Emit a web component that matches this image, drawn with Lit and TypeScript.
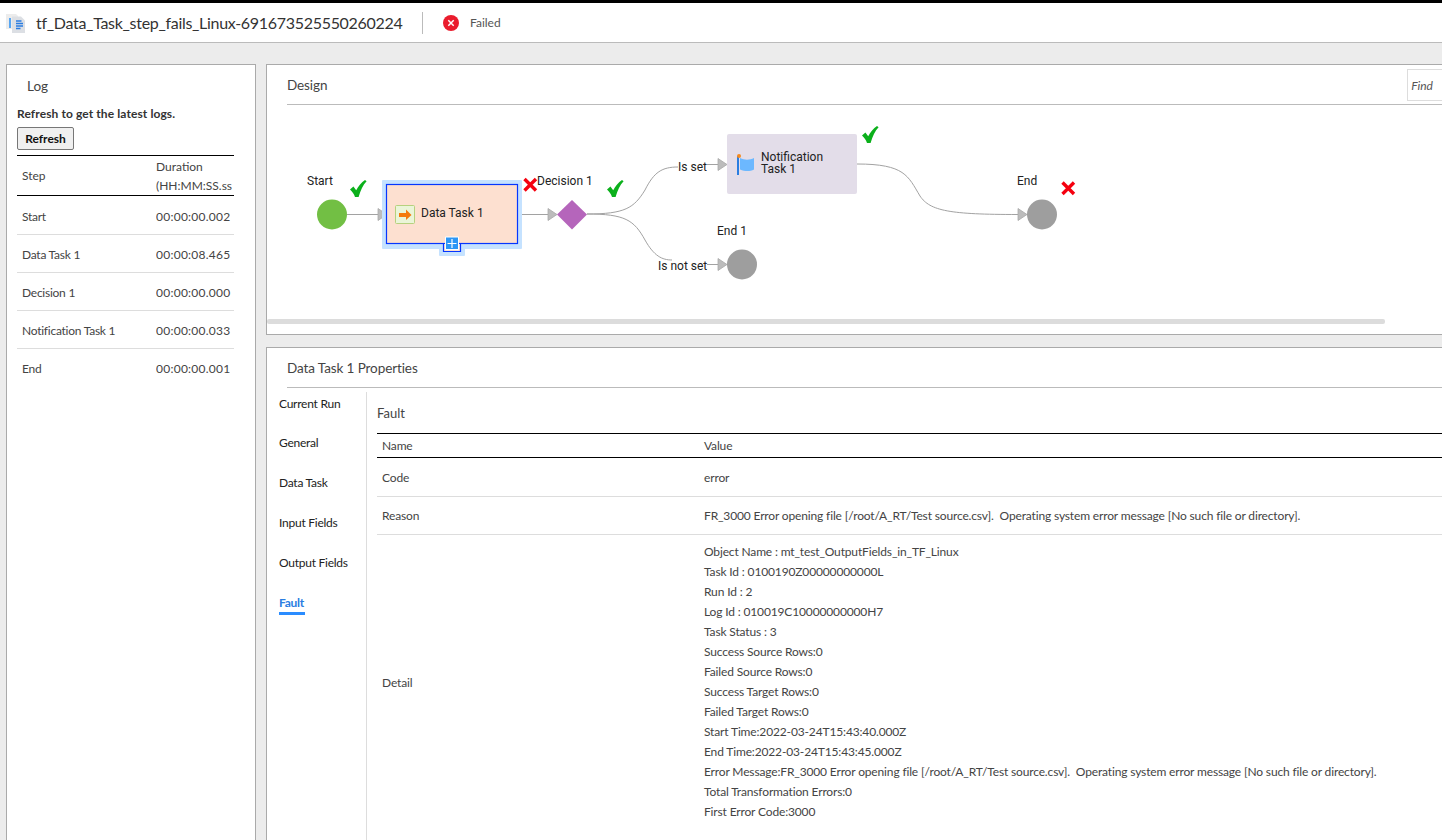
import { LitElement, html, css, svg } from "lit";
import { customElement } from "lit/decorators.js";

const check = (x: number, y: number) => svg`<path transform="translate(${x} ${y})" d="M0 9.5 L3.4 6.6 L6.2 10.2 C8.4 6 11.4 2.6 15 0 L16.6 1.2 C13 5 10.6 10 8.6 17 L5 17 C4 14 2.4 11.6 0 9.5 Z" fill="#0bb01b"/>`;
const cross = (x: number, y: number) => svg`<path transform="translate(${x} ${y})" d="M1.5 1.5 L13 13 M13 1.5 L1.5 13" stroke="#f5000f" stroke-width="3.4" fill="none"/>`;
const arrow = (x: number, y: number) => svg`<path d="M${x} ${y - 6} L${x + 9} ${y} L${x} ${y + 6} Z" fill="#bcbcbc" stroke="#a8a8a8" stroke-width="0.8"/>`;
const label = (x: number, y: number, t: string) => svg`<text x=${x} y=${y} class="t">${t}</text>`;

const LOG = [
  ["Start", "00:00:00.002"],
  ["Data Task 1", "00:00:08.465"],
  ["Decision 1", "00:00:00.000"],
  ["Notification Task 1", "00:00:00.033"],
  ["End", "00:00:00.001"],
];
const TABS = ["Current Run", "General", "Data Task", "Input Fields", "Output Fields", "Fault"];
const DETAIL = [
  "Object Name : mt_test_OutputFields_in_TF_Linux",
  "Task Id : 0100190Z00000000000L",
  "Run Id : 2",
  "Log Id : 010019C10000000000H7",
  "Task Status : 3",
  "Success Source Rows:0",
  "Failed Source Rows:0",
  "Success Target Rows:0",
  "Failed Target Rows:0",
  "Start Time:2022-03-24T15:43:40.000Z",
  "End Time:2022-03-24T15:43:45.000Z",
  "Error Message:FR_3000 Error opening file [/root/A_RT/Test source.csv].  Operating system error message [No such file or directory].",
  "Total Transformation Errors:0",
  "First Error Code:3000",
];

@customElement("app-root")
export class AppRoot extends LitElement {
  static styles = css`
    :host {
      display: block;
      width: 1442px;
      height: 840px;
      overflow: hidden;
      background: #ececec;
      font-family: Lato, "Liberation Sans", sans-serif;
      font-size: 12px;
      color: #444;
    }
    .top {
      height: 39px;
      border-top: 3px solid #000;
      border-bottom: 1px solid #bbb;
      background: #fff;
      display: flex;
      align-items: center;
      padding-left: 6px;
    }
    .top svg { display: block; flex: none; }
    .title { margin-left: 10px; font-size: 16px; color: #333; width: 366px; white-space: nowrap; letter-spacing: -0.3px; }
    .sep { width: 1px; height: 22px; background: #bbb; margin: 0 20px; }
    .status { margin-left: 11px; color: #555; }
    .main {
      display: flex;
      gap: 10px;
      padding: 21px 0 0 6px;
      width: 1600px;
      align-items: flex-start;
    }
    .panel { background: #fff; border: 1px solid #aaa; box-sizing: border-box; }
    .log { width: 250px; height: 800px; padding: 0 20px 0 10px; flex: none; }
    .log h2 { margin: 0; padding: 13px 0 0 10px; font-weight: 400; font-size: 13.5px; line-height: 16px; color: #444; }
    .hint { margin-top: 12px; font-weight: 700; color: #333; line-height: 16px; font-size: 12px; letter-spacing: 0.1px; }
    .refresh {
      display: block;
      margin-top: 5px;
      width: 57px;
      height: 23px;
      padding: 0;
      border: 1px solid #777;
      border-radius: 2px;
      background: #f0f0f0;
      font: 700 12px Lato, sans-serif;
      color: #111;
    }
    table { border-collapse: collapse; table-layout: fixed; }
    .lt { margin-top: 5px; width: 217px; }
    .lt th, .lt td { padding: 0 0 0 5px; text-align: left; font-weight: 400; white-space: nowrap; overflow: hidden; }
    .lt th:nth-child(2), .lt td:nth-child(2) { padding-left: 0; width: 78px; }
    .lt thead tr { border-top: 1px solid #000; border-bottom: 1px solid #000; height: 40px; }
    .lt thead th { line-height: 19px; color: #444; }
    .lt tbody tr { height: 38px; border-bottom: 1px solid #ddd; }
    .lt tbody tr:first-child { height: 39px; }
    .lt tbody td { padding-top: 2px; letter-spacing: -0.25px; }
    .lt tbody td:nth-child(2) { letter-spacing: 0.25px; }
    .lt tbody tr:last-child { border-bottom: 0; }
    .right { flex: none; width: 1300px; display: flex; flex-direction: column; gap: 12px; }
    .design { height: 271px; }
    .phead {
      margin-left: 20px;
      display: flex;
      align-items: center;
      border-bottom: 1px solid #bbb;
      font-size: 13.5px;
      letter-spacing: -0.1px;
      color: #444;
    }
    .design .phead { height: 39px; }
    .findbox {
      margin-left: 1080px;
      width: 60px;
      height: 32px;
      flex: none;
      margin-top: 1px;
      box-sizing: border-box;
      border: 1px solid #ddd;
      display: flex;
      align-items: center;
      padding-left: 3px;
      font-style: italic;
      font-size: 12px;
      color: #555;
    }
    .canvas { display: block; width: 1298px; height: 229px; }
    .t { font: 12px Roboto, sans-serif; fill: #222; }
    .props { height: 600px; }
    .props .phead { height: 39px; }
    .body { display: flex; }
    .tabs {
      width: 87px;
      margin: 4px 0 0 12px;
      border-right: 1px solid #ddd;
      height: 500px;
      flex: none;
    }
    .tab { height: 40px; padding-top: 3px; box-sizing: border-box; line-height: 16px; color: #222; letter-spacing: -0.25px; }
    .tab:first-child { padding-top: 4px; }
    .tab span { display: inline-block; }
    .tab.on span { color: #2a7de1; font-weight: 700; border-bottom: 3px solid #2a8cff; padding: 0 1px 1px 0; }
    .content { padding-left: 10px; flex: 1; }
    .content h3 { margin: 0; padding-top: 17px; font-weight: 400; font-size: 13px; line-height: 16px; color: #444; height: 45px; box-sizing: border-box; }
    .ft { width: 1100px; letter-spacing: -0.15px; }
    .ft th, .ft td { padding: 0 0 0 5px; text-align: left; font-weight: 400; }
    .ft th:first-child, .ft td:first-child { width: 317px; }
    .ft thead tr { height: 24px; border-top: 1px solid #000; border-bottom: 1px solid #000; }
    .ft tbody tr { height: 38px; border-bottom: 1px solid #ddd; }
    .ft tbody tr:first-child { height: 39px; }
    .ft tbody tr:last-child { border-bottom: 0; }
    .ft .pre { white-space: pre; }
    .ft .lines { padding-top: 7px; padding-bottom: 7px; white-space: pre; }
    .ft .lines div { height: 20px; line-height: 20px; }
  `;

  render() {
    return html`
      <div class="top">
        <svg width="20" height="20" viewBox="0 0 20 20">
          <path d="M0 1 H10 L12 3 V16 H0 Z" fill="#ececec"/>
          <path d="M3 5 H5 V15 H3 Z" fill="#58a6f2"/>
          <path d="M6 3.5 H15 L19 7.5 V20 H6 Z" fill="#dcdfe4"/>
          <path d="M10 8 H15.5 M10 10.5 H17 M10 13 H17 M10 15.5 H14.5" stroke="#2a7de1" stroke-width="1.5"/>
        </svg>
        <div class="title">tf_Data_Task_step_fails_Linux-691673525550260224</div>
        <div class="sep"></div>
        <svg width="16" height="16" viewBox="0 0 16 16">
          <circle cx="8" cy="8" r="8" fill="#ea1c2d"/>
          <path d="M5.3 5.3 L10.7 10.7 M10.7 5.3 L5.3 10.7" stroke="#fff" stroke-width="1.5"/>
        </svg>
        <div class="status">Failed</div>
      </div>
      <div class="main">
        <section class="panel log">
          <h2>Log</h2>
          <div class="hint">Refresh to get the latest logs.</div>
          <button class="refresh">Refresh</button>
          <table class="lt">
            <thead><tr><th>Step</th><th>Duration<br />(HH:MM:SS.ss</th></tr></thead>
            <tbody>${LOG.map((r) => html`<tr><td>${r[0]}</td><td>${r[1]}</td></tr>`)}</tbody>
          </table>
        </section>
        <div class="right">
          <section class="panel design">
            <div class="phead">Design<div class="findbox">Find</div></div>
            ${this.diagram()}
          </section>
          <section class="panel props">
            <div class="phead">Data Task 1 Properties</div>
            <div class="body">
              <nav class="tabs">
                ${TABS.map((t) => html`<div class="tab ${t === "Fault" ? "on" : ""}"><span>${t}</span></div>`)}
              </nav>
              <div class="content">
                <h3>Fault</h3>
                <table class="ft">
                  <thead><tr><th>Name</th><th>Value</th></tr></thead>
                  <tbody>
                    <tr><td>Code</td><td>error</td></tr>
                    <tr><td>Reason</td><td class="pre">FR_3000 Error opening file [/root/A_RT/Test source.csv].  Operating system error message [No such file or directory].</td></tr>
                    <tr><td>Detail</td><td class="lines">${DETAIL.map((d) => html`<div>${d}</div>`)}</td></tr>
                  </tbody>
                </table>
              </div>
            </div>
          </section>
        </div>
      </div>
    `;
  }

  diagram() {
    return html`<svg class="canvas" viewBox="267 105 1298 229">
      <g fill="none" stroke="#a2a2a2" stroke-width="1">
        <path d="M347 214.5 H378"/>
        <path d="M518 214.5 H548"/>
        <path d="M587 214 C625 214 634 208 645 190 C654 172 662 167 678 167"/>
        <path d="M587 214 C625 214 634 220 645 240 C654 256 662 260 672 260"/>
        <path d="M707 164.5 H718"/>
        <path d="M707 264.5 H718"/>
        <path d="M857 164 C905 164 908 176 920 196 C930 211 950 214.5 1018 214.5"/>
      </g>
      ${arrow(378, 214.5)}${arrow(548, 214.5)}${arrow(718, 164.5)}${arrow(718, 264.5)}${arrow(1018, 214.5)}

      <circle cx="332" cy="214.5" r="15" fill="#72bf44"/>
      ${label(307, 185, "Start")}
      ${check(350, 180)}

      <rect x="382" y="180" width="140" height="69" rx="1" fill="#c5e2ff"/>
      <rect x="439" y="246" width="26" height="10" rx="1" fill="#c5e2ff"/>
      <rect x="386.5" y="184.5" width="131" height="59" fill="#fde0d0" stroke="#0536ff" stroke-width="1.2"/>
      <path d="M443.5 244 V251.5 H460.5 V244" fill="#fde0d0" stroke="#0536ff" stroke-width="1.2"/>
      <rect x="445" y="236.5" width="14" height="13.5" rx="1" fill="#fff"/>
      <rect x="446" y="237.5" width="12" height="11.5" fill="#2e97f5"/>
      <path d="M452 239 V248 M447.5 243.5 H456.5" stroke="#fff" stroke-width="1.2"/>
      <rect x="395.5" y="205.5" width="19" height="18" rx="1" fill="#eaf5d8" stroke="#b6d17e"/>
      <path d="M399 213 H406 V209.5 L411.5 215 L406 220 V217 H399 Z" fill="#f47a0c"/>
      ${label(421, 217, "Data Task 1")}
      ${cross(523, 177.5)}

      <path d="M572 200 L587 214.5 L572 229.5 L557 214.5 Z" fill="#b565bb"/>
      ${label(537, 185, "Decision 1")}
      ${check(607, 180)}

      ${label(678, 171, "Is set")}
      <rect x="727" y="134" width="130" height="60" rx="2" fill="#e3dde9"/>
      <path d="M738 156 V175" stroke="#2a7de1" stroke-width="2"/>
      <circle cx="739" cy="156" r="2" fill="#f58a1f"/>
      <path d="M740 158 C745 160.5 750 160 754 158 V169.5 C750 171.5 745 171.5 740 169.5 Z" fill="#6cb8ff"/>
      <text class="t" x="761" y="161">Notification</text>
      <text class="t" x="761" y="173">Task 1</text>
      ${check(862, 126)}

      ${label(658, 270, "Is not set")}
      <circle cx="742" cy="264.5" r="15" fill="#9e9e9e"/>
      ${label(717, 235, "End 1")}

      <circle cx="1042" cy="214.5" r="15" fill="#9e9e9e"/>
      ${label(1017, 185, "End")}
      ${cross(1061, 181)}

      <rect x="267" y="319" width="1118" height="5" rx="2" fill="#dcdcdc"/>
    </svg>`;
  }
}
